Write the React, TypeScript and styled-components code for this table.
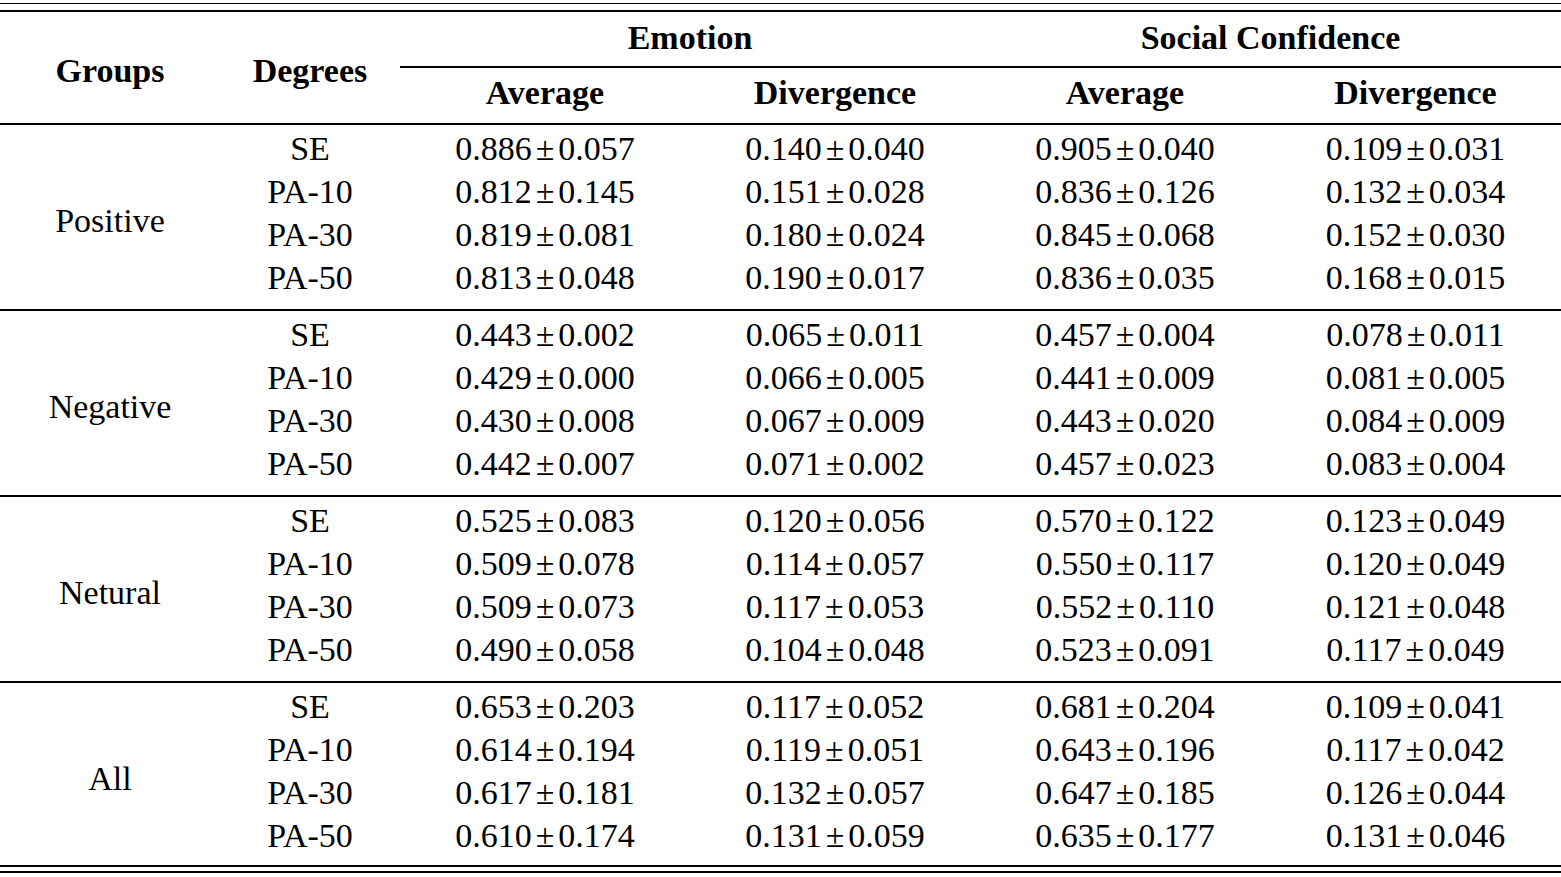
import React from 'react'
import styled, { createGlobalStyle } from 'styled-components'

const GlobalStyle = createGlobalStyle`
  html, body {
    margin: 0;
    padding: 0;
    background: #fff;
  }
  body {
    font-family: "Liberation Serif", "Times New Roman", serif;
    color: #000;
  }
`

const Page = styled.div`
  width: 1561px;
  padding-top: 3px;
  background: #fff;
`

// booktabs style double rule (\toprule / \bottomrule pair)
const DoubleRule = styled.div<{ $first: number; $second: number; $gap: number }>`
  display: flex;
  flex-direction: column;
  gap: ${p => p.$gap}px;
  &::before,
  &::after {
    content: "";
    display: block;
    background: #000;
  }
  &::before { height: ${p => p.$first}px; }
  &::after { height: ${p => p.$second}px; }
`

const Table = styled.table`
  width: 1561px;
  table-layout: fixed;
  border-collapse: separate;
  border-spacing: 0;
  font-size: 34px;
  font-family: "Liberation Serif", "Times New Roman", serif;
`

const Col = styled.col<{ $w: number }>`
  width: ${p => p.$w}px;
`

const SideHead = styled.th`
  font-weight: 700;
  text-align: center;
  vertical-align: middle;
  line-height: 40px;
  padding: 6px 0 0;
  border-bottom: 2px solid #000;
  white-space: nowrap;
`

const SpanHead = styled.th`
  font-weight: 700;
  text-align: center;
  line-height: 51px;
  padding: 0 0 3px;
  border-bottom: 2px solid #000;
  white-space: nowrap;
`

const SubHead = styled.th`
  font-weight: 700;
  text-align: center;
  line-height: 49px;
  padding: 0 0 6px;
  border-bottom: 2px solid #000;
  white-space: nowrap;
`

const GroupCell = styled.td<{ $rule: boolean; $bottom: number }>`
  text-align: center;
  vertical-align: middle;
  line-height: 43px;
  padding: 9px 0 ${p => p.$bottom - 7}px;
  border-bottom: ${p => (p.$rule ? '2px solid #000' : 'none')};
  white-space: nowrap;
`

const Cell = styled.td<{ $first: boolean; $last: boolean; $rule: boolean; $bottom: number }>`
  text-align: center;
  line-height: 43px;
  padding: ${p => (p.$first ? 2 : 0)}px 0 ${p => (p.$last ? p.$bottom : 0)}px;
  border-bottom: ${p => (p.$last && p.$rule ? '2px solid #000' : 'none')};
  white-space: nowrap;
`

const Pm = styled.span`
  padding: 0 4px;
`

type Group = { name: string; rows: [string, string[]][] }

const groups: Group[] = [
  {
    name: 'Positive',
    rows: [
      ['SE', ['0.886±0.057', '0.140±0.040', '0.905±0.040', '0.109±0.031']],
      ['PA-10', ['0.812±0.145', '0.151±0.028', '0.836±0.126', '0.132±0.034']],
      ['PA-30', ['0.819±0.081', '0.180±0.024', '0.845±0.068', '0.152±0.030']],
      ['PA-50', ['0.813±0.048', '0.190±0.017', '0.836±0.035', '0.168±0.015']]
    ]
  },
  {
    name: 'Negative',
    rows: [
      ['SE', ['0.443±0.002', '0.065±0.011', '0.457±0.004', '0.078±0.011']],
      ['PA-10', ['0.429±0.000', '0.066±0.005', '0.441±0.009', '0.081±0.005']],
      ['PA-30', ['0.430±0.008', '0.067±0.009', '0.443±0.020', '0.084±0.009']],
      ['PA-50', ['0.442±0.007', '0.071±0.002', '0.457±0.023', '0.083±0.004']]
    ]
  },
  {
    name: 'Netural',
    rows: [
      ['SE', ['0.525±0.083', '0.120±0.056', '0.570±0.122', '0.123±0.049']],
      ['PA-10', ['0.509±0.078', '0.114±0.057', '0.550±0.117', '0.120±0.049']],
      ['PA-30', ['0.509±0.073', '0.117±0.053', '0.552±0.110', '0.121±0.048']],
      ['PA-50', ['0.490±0.058', '0.104±0.048', '0.523±0.091', '0.117±0.049']]
    ]
  },
  {
    name: 'All',
    rows: [
      ['SE', ['0.653±0.203', '0.117±0.052', '0.681±0.204', '0.109±0.041']],
      ['PA-10', ['0.614±0.194', '0.119±0.051', '0.643±0.196', '0.117±0.042']],
      ['PA-30', ['0.617±0.181', '0.132±0.057', '0.647±0.185', '0.126±0.044']],
      ['PA-50', ['0.610±0.174', '0.131±0.059', '0.635±0.177', '0.131±0.046']]
    ]
  }
]

function Value({ text }: { text: string }) {
  const [a, b] = text.split('±')
  return (
    <>
      {a}
      <Pm>±</Pm>
      {b}
    </>
  )
}

export default function App() {
  return (
    <Page>
      <GlobalStyle />
      <DoubleRule $first={1} $second={2} $gap={6} />
      <Table>
        <colgroup>
          <Col $w={220} />
          <Col $w={180} />
          <Col $w={290} />
          <Col $w={290} />
          <Col $w={290} />
          <Col $w={291} />
        </colgroup>
        <thead>
          <tr>
            <SideHead rowSpan={2}>Groups</SideHead>
            <SideHead rowSpan={2}>Degrees</SideHead>
            <SpanHead colSpan={2}>Emotion</SpanHead>
            <SpanHead colSpan={2}>Social Confidence</SpanHead>
          </tr>
          <tr>
            <SubHead>Average</SubHead>
            <SubHead>Divergence</SubHead>
            <SubHead>Average</SubHead>
            <SubHead>Divergence</SubHead>
          </tr>
        </thead>
        <tbody>
          {groups.map((g, gi) => {
            const rule = gi < groups.length - 1
            const bottom = rule ? 10 : 8
            return g.rows.map(([degree, values], ri) => {
              const first = ri === 0
              const last = ri === g.rows.length - 1
              return (
                <tr key={g.name + degree}>
                  {first && (
                    <GroupCell rowSpan={g.rows.length} $rule={rule} $bottom={bottom}>
                      {g.name}
                    </GroupCell>
                  )}
                  <Cell $first={first} $last={last} $rule={rule} $bottom={bottom}>
                    {degree}
                  </Cell>
                  {values.map((v, vi) => (
                    <Cell key={vi} $first={first} $last={last} $rule={rule} $bottom={bottom}>
                      <Value text={v} />
                    </Cell>
                  ))}
                </tr>
              )
            })
          })}
        </tbody>
      </Table>
      <DoubleRule $first={2} $second={2} $gap={4} />
    </Page>
  )
}
